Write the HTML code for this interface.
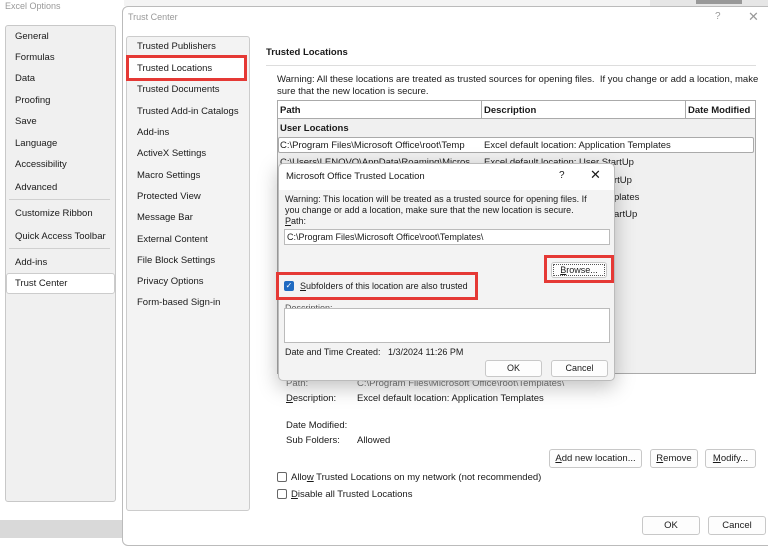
<!DOCTYPE html>
<html><head><style>
*{box-sizing:border-box;margin:0;padding:0}
body{width:768px;height:538px;overflow:hidden;background:#fff;font-family:"Liberation Sans",sans-serif;font-size:9.5px;color:#1a1a1a;position:relative}
.a{position:absolute;white-space:nowrap}
.btn{position:absolute;background:#fdfdfd;border:1px solid #c8c8c8;border-radius:3px;text-align:center;font-size:9.5px}
.red{position:absolute;border:3px solid #e53935}
.cb{position:absolute;width:10px;height:10px;border:1px solid #666;border-radius:2px;background:#fff}
u{text-decoration:underline}
</style></head><body>
<!-- behind top strip -->
<div class="a" style="left:0;top:0;width:768px;height:6px;background:#f4f4f4"></div>
<div class="a" style="left:650px;top:0;width:118px;height:6px;background:#e6e6e6"></div>
<div class="a" style="left:696px;top:0;width:46px;height:4px;background:#999"></div>
<!-- Excel options -->
<div class="a" style="left:0;top:0;width:124px;height:520px;background:#fff"></div>
<div class="a" style="left:0;top:520px;width:124px;height:18px;background:#d9d9d9"></div>
<div class="a" style="left:5px;top:1px;color:#999;font-size:9px">Excel Options</div>
<div class="a" style="left:5px;top:25px;width:111px;height:477px;background:#f0f0f0;border:1px solid #c8c8c8;border-radius:3px"></div>
<div class="a" style="left:15px;top:31px">General</div>
<div class="a" style="left:15px;top:52px">Formulas</div>
<div class="a" style="left:15px;top:73px">Data</div>
<div class="a" style="left:15px;top:95px">Proofing</div>
<div class="a" style="left:15px;top:116px">Save</div>
<div class="a" style="left:15px;top:138px">Language</div>
<div class="a" style="left:15px;top:159px">Accessibility</div>
<div class="a" style="left:15px;top:182px">Advanced</div>
<div class="a" style="left:9px;top:199px;width:101px;height:1px;background:#d0d0d0"></div>
<div class="a" style="left:15px;top:208px">Customize Ribbon</div>
<div class="a" style="left:15px;top:231px">Quick Access Toolbar</div>
<div class="a" style="left:9px;top:248px;width:101px;height:1px;background:#d0d0d0"></div>
<div class="a" style="left:15px;top:257px">Add-ins</div>
<div class="a" style="left:6px;top:273px;width:109px;height:21px;background:#fff;border:1px solid #ccc;border-radius:3px"></div>
<div class="a" style="left:15px;top:278px">Trust Center</div>
<!-- Trust center -->
<div class="a" style="left:122px;top:6px;width:660px;height:540px;background:#fff;border:1px solid #bbb;border-radius:6px"></div>
<div class="a" style="left:128px;top:12px;color:#999;font-size:9px">Trust Center</div>
<div class="a" style="left:715px;top:11px;color:#999;font-size:10px">?</div>
<div class="a" style="left:748px;top:9px;color:#999;font-size:13px">✕</div>
<div class="a" style="left:126px;top:36px;width:124px;height:208px;background:#f3f3f3;border:1px solid #ccc;border-radius:3px;height:475px"></div>
<div class="a" style="left:137px;top:41px">Trusted Publishers</div>
<div class="a" style="left:128px;top:57px;width:117px;height:22px;background:#fff"></div>
<div class="red" style="left:126px;top:55px;width:121px;height:26px"></div>
<div class="a" style="left:137px;top:63px">Trusted Locations</div>
<div class="a" style="left:137px;top:84px">Trusted Documents</div>
<div class="a" style="left:137px;top:106px">Trusted Add-in Catalogs</div>
<div class="a" style="left:137px;top:127px">Add-ins</div>
<div class="a" style="left:137px;top:148px">ActiveX Settings</div>
<div class="a" style="left:137px;top:170px">Macro Settings</div>
<div class="a" style="left:137px;top:191px">Protected View</div>
<div class="a" style="left:137px;top:212px">Message Bar</div>
<div class="a" style="left:137px;top:234px">External Content</div>
<div class="a" style="left:137px;top:255px">File Block Settings</div>
<div class="a" style="left:137px;top:276px">Privacy Options</div>
<div class="a" style="left:137px;top:297px">Form-based Sign-in</div>
<div class="a" style="left:266px;top:47px;font-weight:bold">Trusted Locations</div>
<div class="a" style="left:266px;top:65px;width:490px;height:1px;background:#ddd"></div>
<div class="a" style="left:277px;top:74px;line-height:12px">Warning: All these locations are treated as trusted sources for opening files.&nbsp; If you change or add a location, make<br>sure that the new location is secure.</div>
<!-- table -->
<div class="a" style="left:277px;top:100px;width:479px;height:274px;background:#f0f0f0;border:1px solid #aaa"></div>
<div class="a" style="left:278px;top:101px;width:477px;height:18px;background:#fff;border-bottom:1px solid #aaa"></div>
<div class="a" style="left:481px;top:101px;width:1px;height:18px;background:#aaa"></div>
<div class="a" style="left:685px;top:101px;width:1px;height:18px;background:#aaa"></div>
<div class="a" style="left:280px;top:105px;font-weight:bold">Path</div>
<div class="a" style="left:484px;top:105px;font-weight:bold">Description</div>
<div class="a" style="left:688px;top:105px;font-weight:bold">Date Modified</div>
<div class="a" style="left:280px;top:123px;font-weight:bold">User Locations</div>
<div class="a" style="left:278px;top:137px;width:476px;height:16px;background:#fff;border:1px solid #aaa;border-radius:2px"></div>
<div class="a" style="left:280px;top:140px">C:\Program Files\Microsoft Office\root\Temp</div>
<div class="a" style="left:484px;top:140px">Excel default location: Application Templates</div>
<div class="a" style="left:280px;top:157px">C:\Users\LENOVO\AppData\Roaming\Micros</div>
<div class="a" style="left:484px;top:157px">Excel default location: User StartUp</div>
<div class="a" style="left:614px;top:175px">rtUp</div>
<div class="a" style="left:614px;top:192px">plates</div>
<div class="a" style="left:614px;top:209px">artUp</div>
<!-- details -->
<div class="a" style="left:286px;top:378px;color:#777">Path:</div>
<div class="a" style="left:357px;top:378px;color:#777">C:\Program Files\Microsoft Office\root\Templates\</div>
<div class="a" style="left:286px;top:393px"><u>D</u>escription:</div>
<div class="a" style="left:357px;top:393px">Excel default location: Application Templates</div>
<div class="a" style="left:286px;top:420px">Date Modified:</div>
<div class="a" style="left:286px;top:435px">Sub Folders:</div>
<div class="a" style="left:357px;top:435px">Allowed</div>
<div class="btn" style="left:549px;top:449px;width:93px;height:19px;line-height:17px"><u>A</u>dd new location...</div>
<div class="btn" style="left:650px;top:449px;width:48px;height:19px;line-height:17px"><u>R</u>emove</div>
<div class="btn" style="left:705px;top:449px;width:51px;height:19px;line-height:17px"><u>M</u>odify...</div>
<div class="cb" style="left:277px;top:472px"></div>
<div class="a" style="left:291px;top:472px">Allo<u>w</u> Trusted Locations on my network (not recommended)</div>
<div class="cb" style="left:277px;top:489px"></div>
<div class="a" style="left:291px;top:489px"><u>D</u>isable all Trusted Locations</div>
<div class="btn" style="left:642px;top:516px;width:58px;height:19px;line-height:17px">OK</div>
<div class="btn" style="left:708px;top:516px;width:58px;height:19px;line-height:17px">Cancel</div>
<!-- modal -->
<div class="a" style="left:278px;top:163px;width:337px;height:218px;background:#f3f3f3;border:1px solid #bbb;border-radius:5px;box-shadow:0 6px 20px rgba(0,0,0,.25)"></div>
<div class="a" style="left:279px;top:164px;width:335px;height:26px;background:#fff;border-radius:5px 5px 0 0"></div>
<div class="a" style="left:286px;top:171px;font-size:9.5px">Microsoft Office Trusted Location</div>
<div class="a" style="left:559px;top:170px;font-size:10px">?</div>
<div class="a" style="left:590px;top:167px;font-size:13px">✕</div>
<div class="a" style="left:285px;top:194px;line-height:10.5px;font-size:9px">Warning: This location will be treated as a trusted source for opening files. If<br>you change or add a location, make sure that the new location is secure.</div>
<div class="a" style="left:285px;top:216px;font-size:9px"><u>P</u>ath:</div>
<div class="a" style="left:284px;top:229px;width:326px;height:16px;background:#fff;border:1px solid #bbb"></div>
<div class="a" style="left:287px;top:232px;font-size:9px">C:\Program Files\Microsoft Office\root\Templates\</div>
<div class="btn" style="left:551px;top:262px;width:56px;height:16px;line-height:14px;font-size:9px;outline:1px dotted #555;outline-offset:-3px"><u>B</u>rowse...</div>
<div class="red" style="left:544px;top:255px;width:70px;height:28px"></div>
<div class="a" style="left:285px;top:303px;font-size:9px;color:#555">Description:</div>
<div class="a" style="left:278px;top:274px;width:199px;height:25px;background:#f3f3f3"></div>
<div class="red" style="left:276px;top:272px;width:202px;height:28px"></div>
<div class="a" style="left:284px;top:281px;width:10px;height:10px;background:#1f6ac1;border-radius:2px;color:#fff;font-size:8px;line-height:10px;text-align:center">✓</div>
<div class="a" style="left:300px;top:281px;font-size:9px"><u>S</u>ubfolders of this location are also trusted</div>
<div class="a" style="left:284px;top:308px;width:326px;height:35px;background:#fff;border:1px solid #bbb"></div>
<div class="a" style="left:285px;top:347px;font-size:9px">Date and Time Created:</div>
<div class="a" style="left:388px;top:347px;font-size:9px">1/3/2024 11:26 PM</div>
<div class="btn" style="left:485px;top:360px;width:57px;height:17px;line-height:15px;font-size:9px">OK</div>
<div class="btn" style="left:551px;top:360px;width:57px;height:17px;line-height:15px;font-size:9px">Cancel</div>
</body></html>
